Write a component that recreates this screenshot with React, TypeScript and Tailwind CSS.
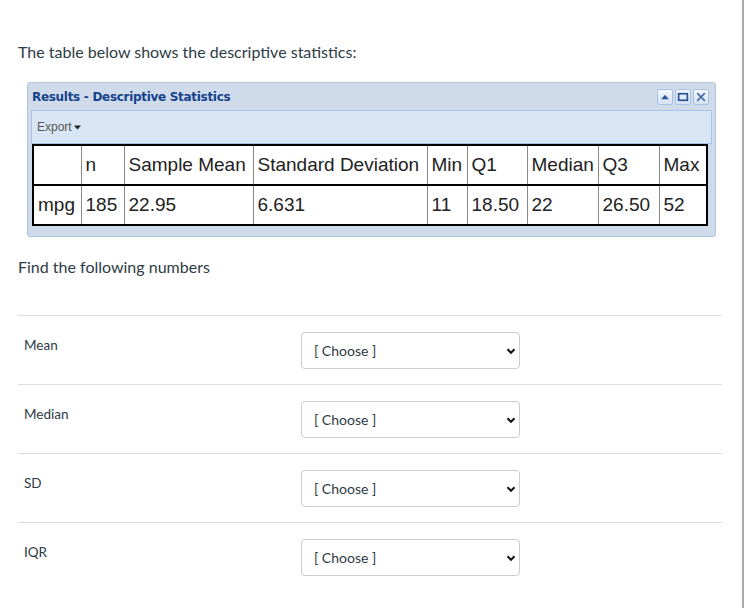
import React from "react"

const cols = [
  { w: 48, h: "", d: "mpg" },
  { w: 43, h: "n", d: "185" },
  { w: 129, h: "Sample Mean", d: "22.95" },
  { w: 174, h: "Standard Deviation", d: "6.631" },
  { w: 40, h: "Min", d: "11" },
  { w: 60, h: "Q1", d: "18.50" },
  { w: 71, h: "Median", d: "22" },
  { w: 61, h: "Q3", d: "26.50" },
  { w: 48, h: "Max", d: "52" },
]

const questions = ["Mean", "Median", "SD", "IQR"]

function ToolBtn({ kind }: { kind: "up" | "max" | "close" }) {
  return (
    <div className="w-[16px] h-[16px] rounded-[2px] border border-[#a9c2e4] bg-gradient-to-b from-[#f2f7fd] to-[#d5e3f5] flex items-center justify-center">
      <svg width="12" height="12" viewBox="0 0 11 11">
        {kind === "up" && <polygon points="2,7.5 9,7.5 5.5,3.5" fill="#2b5797" />}
        {kind === "max" && (
          <rect x="1.5" y="2.5" width="8" height="6" fill="none" stroke="#2b5797" strokeWidth="1.6" />
        )}
        {kind === "close" && (
          <path d="M2 2 L9 9 M9 2 L2 9" stroke="#4a6fa8" strokeWidth="1.6" />
        )}
      </svg>
    </div>
  )
}

function Choose() {
  return (
    <div className="w-[219px] h-[37px] border border-[#c7cdd1] rounded-[4px] bg-white flex items-center justify-between pl-[12px] pr-[3px]">
      <span className="text-[14px] text-[#2d3b45]">[ Choose ]</span>
      <svg width="10" height="10" viewBox="0 0 10 10">
        <path d="M1.5 3.2 L5 6.8 L8.5 3.2" fill="none" stroke="#111" strokeWidth="2" />
      </svg>
    </div>
  )
}

export default function App() {
  return (
    <div
      className="w-[744px] h-[608px] bg-white border-r-2 border-[#aaaaaa] pl-[18px] pt-[42px] text-[#2d3b45]"
      style={{ fontFamily: "Lato, 'Noto Sans', sans-serif" }}
    >
      <p className="text-[16px] leading-[20px]">The table below shows the descriptive statistics:</p>

      {/* results panel */}
      <div className="ml-[9px] mt-[20px] w-[689px] h-[155px] border border-[#aec4df] rounded-[3px] bg-[#cfdbea] px-[3px]">
        <div className="h-[27px] flex items-center justify-between pl-[1px] pr-[3px]">
          <span
            className="text-[12px] font-bold text-[#15428b]"
            style={{ fontFamily: "'DejaVu Sans', Verdana, sans-serif", letterSpacing: "-0.3px" }}
          >
            Results - Descriptive Statistics
          </span>
          <div className="flex gap-[2px]">
            <ToolBtn kind="up" />
            <ToolBtn kind="max" />
            <ToolBtn kind="close" />
          </div>
        </div>
        <div className="h-[34px] border border-[#a9c3e6] bg-[#d8e5f4] flex items-center pl-[5px]">
          <span
            className="text-[12px] text-[#555] flex items-center gap-[2px]"
            style={{ fontFamily: "'Liberation Sans', Arial, sans-serif" }}
          >
            Export
            <svg width="7" height="5" viewBox="0 0 7 5">
              <polygon points="0,0.5 7,0.5 3.5,4.5" fill="#222" />
            </svg>
          </span>
        </div>
        <table
          className="ml-[1px] border-collapse border-2 border-black bg-white text-[19px] text-[#222]"
          style={{ fontFamily: "'Liberation Sans', Arial, sans-serif" }}
        >
          <tbody>
            <tr className="h-[40px] border-b-2 border-black">
              {cols.map((c, i) => (
                <td
                  key={i}
                  className="border-l border-[#888] first:border-l-0 pl-[4px] pr-0 align-middle whitespace-nowrap"
                  style={{ width: c.w, minWidth: c.w }}
                >
                  {c.h}
                </td>
              ))}
            </tr>
            <tr className="h-[40px]">
              {cols.map((c, i) => (
                <td
                  key={i}
                  className="border-l border-[#888] first:border-l-0 pl-[4px] align-middle whitespace-nowrap"
                >
                  {c.d}
                </td>
              ))}
            </tr>
          </tbody>
        </table>
      </div>

      <p className="text-[16px] leading-[19px] mt-[20px]">Find the following numbers</p>

      <div className="mt-[39px] w-[704px]">
        {questions.map((q) => (
          <div key={q} className="border-t border-[#dddddd] flex items-start pt-[16px] h-[69px]">
            <div className="w-[283px] pl-[6px] pt-[3px] text-[13.5px]">{q}</div>
            <Choose />
          </div>
        ))}
      </div>
    </div>
  )
}
